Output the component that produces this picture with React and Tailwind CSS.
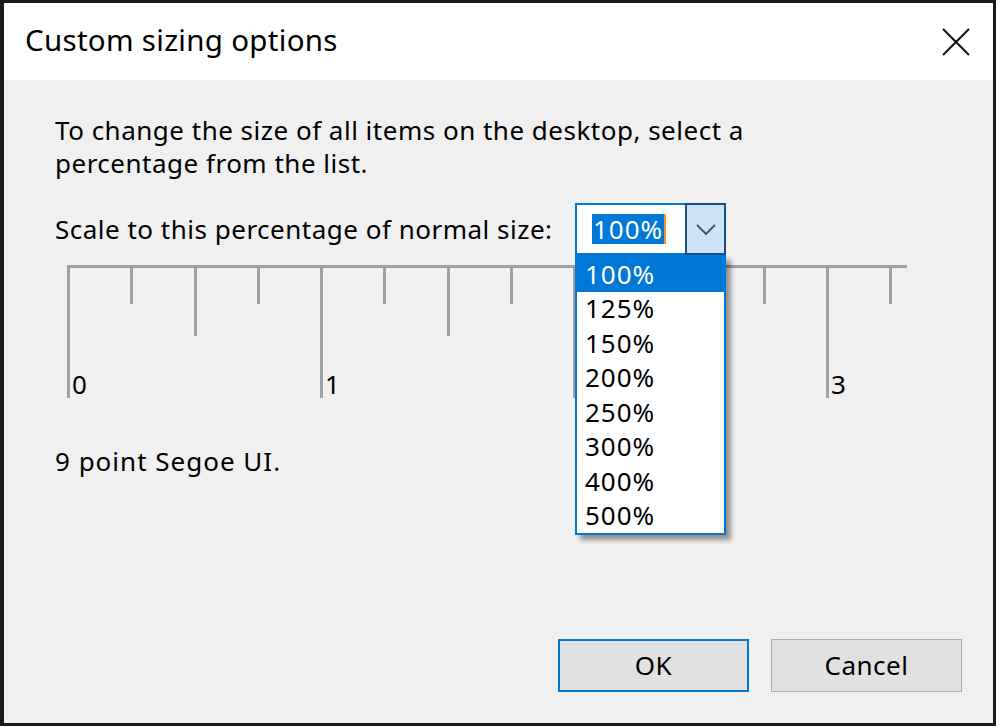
import React from 'react';

const options = ['100%', '125%', '150%', '200%', '250%', '300%', '400%', '500%'];
const tickGap = 63.25;

// label "2" sits under the open list, so it is left out
const rulerLabels = [
  { label: '0', at: 0 },
  { label: '1', at: 4 },
  { label: '3', at: 12 },
];

const Ruler = () => {
  const ticks = Array.from({ length: 14 }, (_, i) => i);
  return (
    <svg width="845" height="145" className="block -mb-[10px]">
      <rect x="0" y="0" width="840" height="3" fill="#a0a0a0" />
      {ticks.map((i) => {
        const x = Math.round(i * tickGap);
        const h = i % 4 === 0 ? 133 : i % 2 === 0 ? 71 : 39;
        return <rect key={i} x={x} y="0" width="3" height={h} fill="#a0a0a0" />;
      })}
      {rulerLabels.map(({ label, at }) => (
        <text
          key={label}
          x={Math.round(at * tickGap) + 5}
          y="129"
          fontSize="26"
          fill="#000"
          fontFamily="'Noto Sans', sans-serif"
        >
          {label}
        </text>
      ))}
    </svg>
  );
};

const ScaleCombo = () => (
  <div className="relative w-[151px] h-[52px] border-2 border-[#0078d7] bg-white flex">
    <div className="flex-1 flex items-center pl-[15px]">
      <span className="bg-[#0078d7] text-white leading-[30px] px-[1px] tracking-[1px]">100%</span>
      <span className="w-[2px] h-[30px] bg-[#f7941d]" />
    </div>
    <div className="w-[41px] my-[-2px] mr-[-2px] border-2 border-[#1a4f86] bg-[#cce4f7] flex items-center justify-center">
      <svg width="22" height="13" viewBox="0 0 22 13">
        <path d="M2 2 L11 11 L20 2" fill="none" stroke="#505050" strokeWidth="1.8" />
      </svg>
    </div>

    {/* open list */}
    <div className="absolute left-[-2px] top-[50px] w-[151px] border-2 border-[#0078d7] bg-white shadow-[5px_5px_5px_rgba(0,0,0,0.4)] z-10">
      {options.map((opt, idx) => (
        <div
          key={opt}
          className={`h-[34.5px] flex items-center pl-[8px] tracking-[1px] ${
            idx === 0 ? 'bg-[#0078d7] text-white' : 'text-black'
          }`}
        >
          {opt}
        </div>
      ))}
    </div>
  </div>
);

export default function App() {
  return (
    <div
      className="w-[1000px] h-[728px] bg-white pr-[4px] pb-[2px] text-[26px] tracking-[0.5px] text-black"
      style={{ fontFamily: "'Noto Sans', 'Open Sans', sans-serif" }}
    >
      <div className="h-full flex flex-col border-l-4 border-t-[3px] border-r-[3px] border-b-[3px] border-[#1b1b1b]">
        {/* Title bar */}
        <div className="h-[77px] bg-white flex items-center justify-between pl-[21px] pr-[23px] shrink-0">
          <span className="text-[29.5px] leading-none tracking-[0.3px] -mt-[3px]">Custom sizing options</span>
          <svg width="28" height="28" viewBox="0 0 28 28">
            <path d="M1 1 L27 27 M27 1 L1 27" stroke="#111" strokeWidth="2" />
          </svg>
        </div>

        {/* Body */}
        <div className="flex-1 bg-[#f0f0f0] flex flex-col pl-[51px] pt-[34px] pb-[31px] pr-[31px]">
          <p className="leading-[33px] w-[740px]">
            To change the size of all items on the desktop, select a percentage from the list.
          </p>

          <div className="flex items-center mt-[23px]">
            <span className="w-[520px] leading-[33px]">Scale to this percentage of normal size:</span>
            <ScaleCombo />
          </div>

          <div className="mt-[10px] ml-[12px]">
            <Ruler />
          </div>

          <p className="leading-[33px] mt-[45px] tracking-[1px]">9 point Segoe UI.</p>

          <div className="mt-auto flex justify-end gap-[22px]">
            <button
              type="button"
              className="w-[191px] h-[53px] border-2 border-[#0078d7] bg-[#e1e1e1] flex items-center justify-center"
            >
              OK
            </button>
            <button
              type="button"
              className="w-[191px] h-[53px] border border-[#adadad] bg-[#e1e1e1] flex items-center justify-center"
            >
              Cancel
            </button>
          </div>
        </div>
      </div>
    </div>
  );
}
